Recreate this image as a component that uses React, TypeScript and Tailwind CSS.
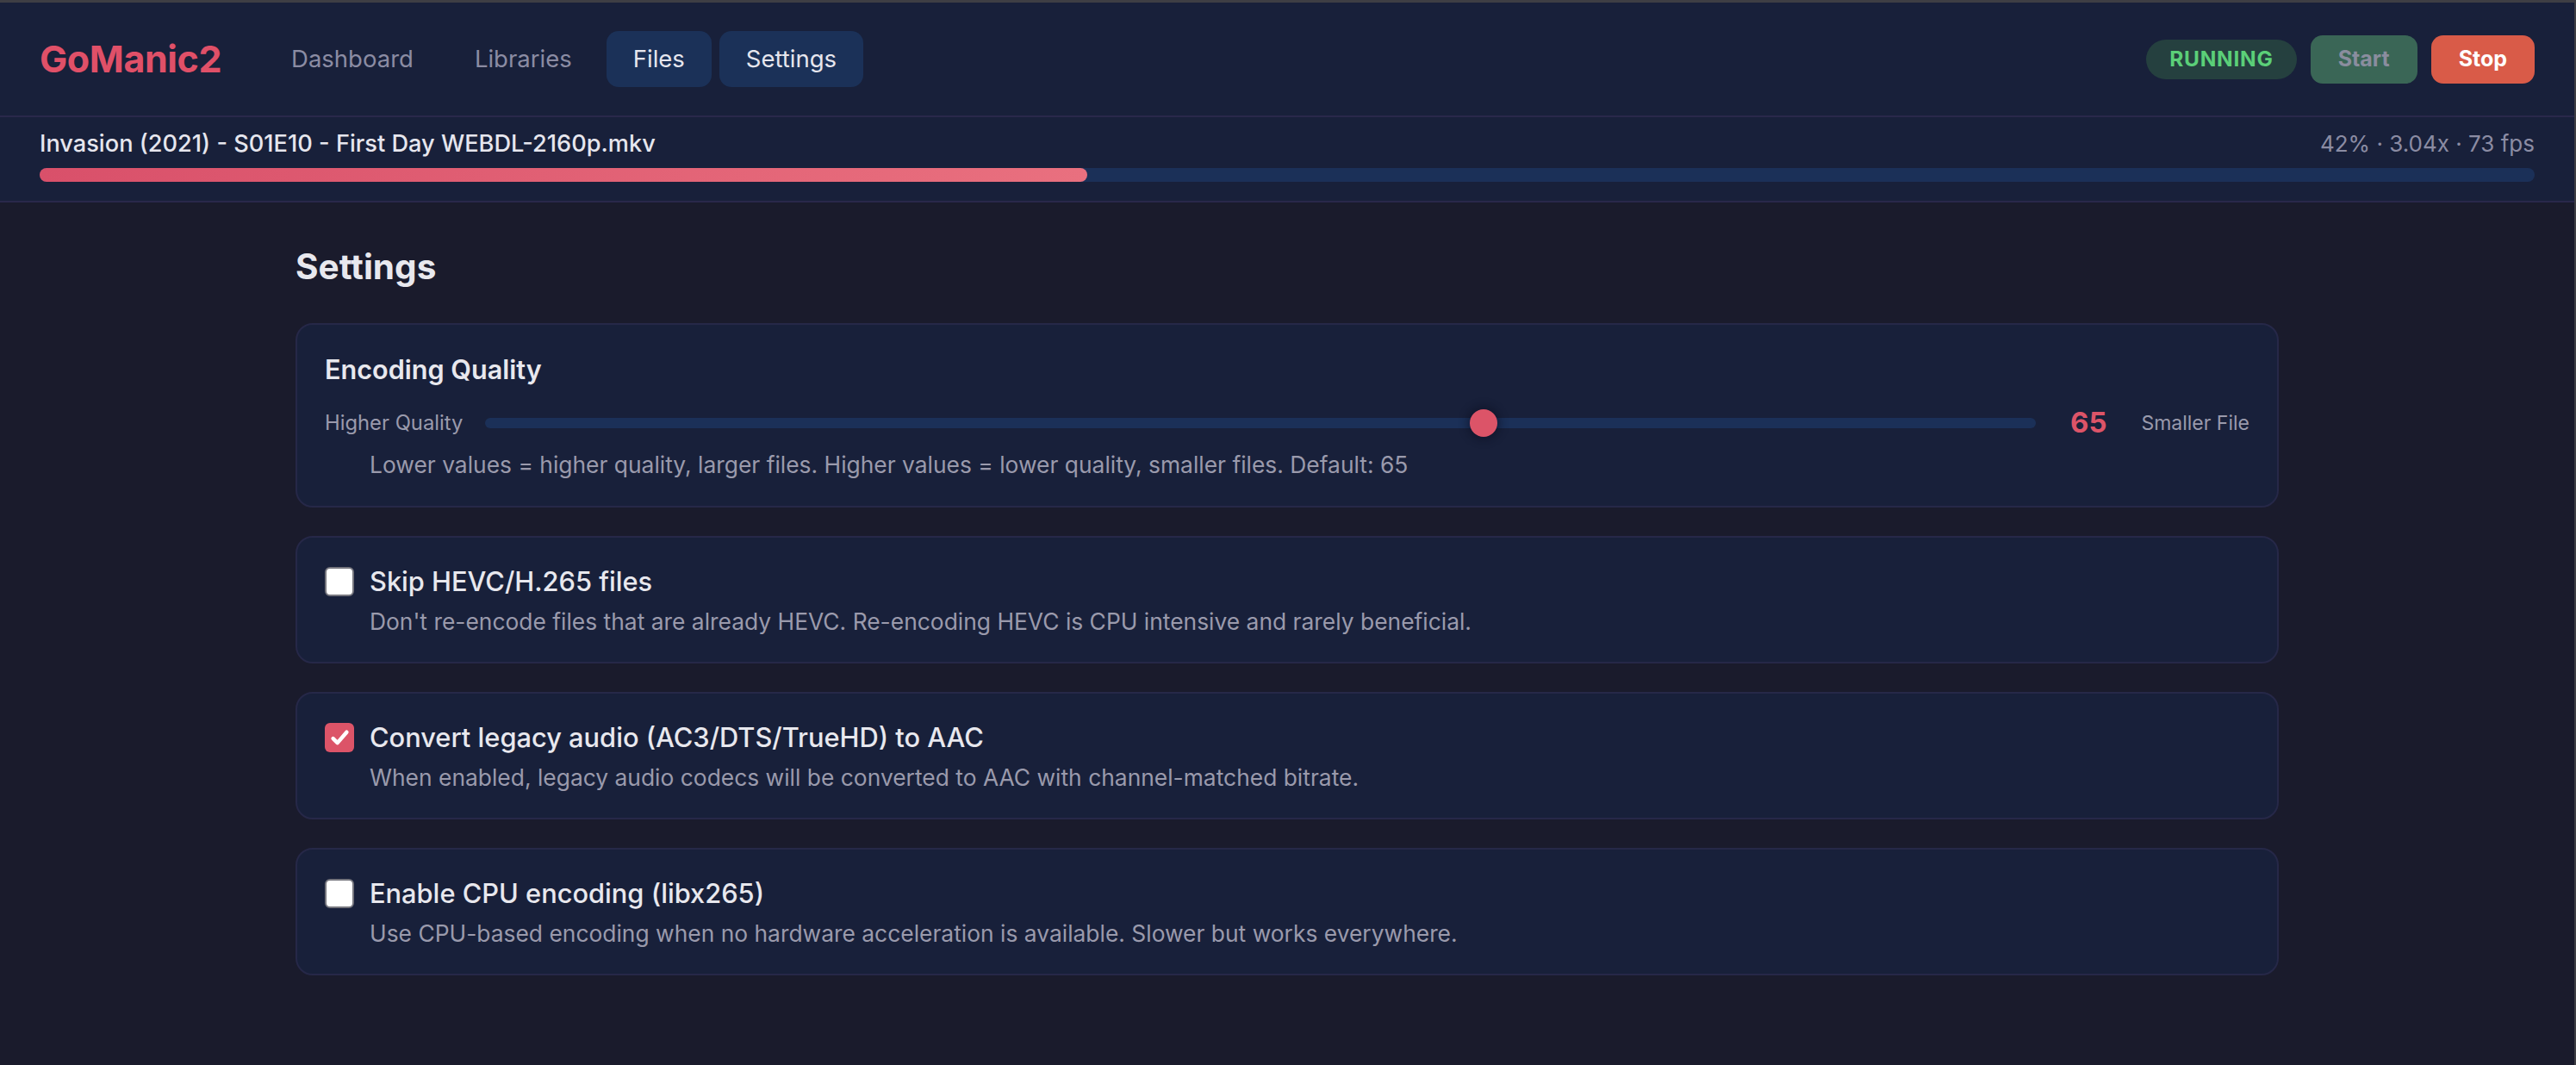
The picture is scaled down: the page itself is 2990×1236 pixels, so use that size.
import React from "react";

type Toggle = {
  key: string;
  title: string;
  description: string;
  checked: boolean;
};

const toggles: Toggle[] = [
  {
    key: "skip-hevc",
    title: "Skip HEVC/H.265 files",
    description:
      "Don't re-encode files that are already HEVC. Re-encoding HEVC is CPU intensive and rarely beneficial.",
    checked: false,
  },
  {
    key: "legacy-audio",
    title: "Convert legacy audio (AC3/DTS/TrueHD) to AAC",
    description: "When enabled, legacy audio codecs will be converted to AAC with channel-matched bitrate.",
    checked: true,
  },
  {
    key: "cpu-encoding",
    title: "Enable CPU encoding (libx265)",
    description: "Use CPU-based encoding when no hardware acceleration is available. Slower but works everywhere.",
    checked: false,
  },
];

const navItems = [
  { label: "Dashboard", active: false },
  { label: "Libraries", active: false },
  { label: "Files", active: true },
  { label: "Settings", active: true },
];

function Checkbox({ checked }: { checked: boolean }) {
  if (checked) {
    return (
      <span className="mt-[1px] flex h-[34px] w-[34px] shrink-0 items-center justify-center rounded-[6px] bg-[#dc5468]">
        <svg viewBox="0 0 24 24" className="h-[27px] w-[27px]" fill="none">
          <path d="M5 12.5l4.5 4.5L19 6" stroke="white" strokeWidth="4" strokeLinecap="round" strokeLinejoin="round" />
        </svg>
      </span>
    );
  }
  return <span className="mt-[1px] block h-[34px] w-[34px] shrink-0 rounded-[6px] border-2 border-[#76767e] bg-white" />;
}

function QualitySlider({ value, min, max }: { value: number; min: number; max: number }) {
  const frac = (value - min) / (max - min);
  return (
    <div className="mt-[29px] flex h-[32px] items-center gap-[26px]">
      <span className="text-[23.8px] text-[#9a9aac]">Higher Quality</span>
      <div className="relative h-[12px] flex-1 rounded-full bg-[#1b3058]">
        <span
          className="absolute top-1/2 h-[32px] w-[32px] -translate-y-1/2 rounded-full bg-[#dc5468] shadow-[0_0_10px_4px_rgba(10,14,30,0.45)]"
          style={{ left: `calc(${frac * 100}% - ${frac * 32}px)` }}
        />
      </div>
      <span className="w-[70px] text-center text-[33px] font-bold text-[#dc5468]">{value}</span>
      <span className="text-[23px] text-[#9a9aac]">Smaller File</span>
    </div>
  );
}

export default function App() {
  return (
    <div className="min-h-screen border-t-[3px] border-r-2 border-[#3e3e44] bg-[#1a1b2c] font-['Inter',sans-serif]">
      {/* top bar */}
      <header className="flex h-[133px] items-center justify-between border-b-2 border-[#29284a] bg-[#18203a] px-[46px]">
        <div className="flex items-center gap-[50px]">
          <span className="text-[43px] font-bold tracking-[-0.01em] text-[#e05068]">GoManic2</span>
          <nav className="flex items-center gap-[9px]">
            {navItems.map((item) => (
              <span
                key={item.label}
                className={
                  item.active
                    ? "flex h-[65px] items-center rounded-[14px] bg-[#1b3158] px-[31px] text-[27.5px] text-[#e6e6ee]"
                    : "flex h-[65px] items-center rounded-[14px] px-[31px] text-[27.5px] text-[#8b8ca3]"
                }
              >
                {item.label}
              </span>
            ))}
          </nav>
        </div>
        <div className="flex items-center gap-[16px]">
          <span className="flex h-[46px] items-center rounded-full bg-[#25403f] px-[27px] text-[24.5px] font-bold tracking-[0.03em] text-[#5bcf78]">
            RUNNING
          </span>
          <span className="flex h-[56px] items-center rounded-[14px] bg-[#3a6656] px-[32px] text-[25px] font-bold text-[#8a8d9e]">
            Start
          </span>
          <span className="flex h-[56px] items-center rounded-[14px] bg-[#d95b48] px-[32px] text-[25px] font-bold text-white">
            Stop
          </span>
        </div>
      </header>

      {/* current job */}
      <section className="border-b-2 border-[#29284a] bg-[#18203a] px-[46px] pb-[22px] pt-[13px]">
        <div className="flex items-center justify-between leading-[36px]">
          <span className="text-[27.2px] font-medium text-[#e6e6ee]">
            Invasion (2021) - S01E10 - First Day WEBDL-2160p.mkv
          </span>
          <span className="text-[26px] text-[#8b8ca3]">42% · 3.04x · 73 fps</span>
        </div>
        <div className="mt-[10px] h-[16px] rounded-full bg-[#1b3058]">
          <div className="h-full w-[42%] rounded-full bg-gradient-to-r from-[#d9506a] to-[#e9707f]" />
        </div>
      </section>

      <main className="mx-auto max-w-[2302px] pb-[60px] pt-[50px]">
        <h1 className="mb-[40px] text-[40.5px] font-bold leading-[50px] text-[#e8e8ee]">Settings</h1>

        <div className="flex flex-col gap-[33px]">
          <div className="rounded-[20px] border-2 border-[#262848] bg-[#18203a] px-[32px] pb-[30px] pt-[34px]">
            <h2 className="text-[30.6px] font-semibold leading-[35px] text-[#e8e8ee]">Encoding Quality</h2>
            <QualitySlider value={65} min={1} max={100} />
            <p className="ml-[52px] mt-[14px] text-[26.4px] leading-[36px] text-[#9a9aac]">
              Lower values = higher quality, larger files. Higher values = lower quality, smaller files. Default: 65
            </p>
          </div>

          {toggles.map((t) => (
            <div
              key={t.key}
              className="flex items-start gap-[18px] rounded-[20px] border-2 border-[#262848] bg-[#18203a] px-[32px] pb-[29px] pt-[33px]"
            >
              <Checkbox checked={t.checked} />
              <div>
                <div className="text-[30.8px] font-medium leading-[36px] text-[#e8e8ee]">{t.title}</div>
                <p className="mt-[10px] text-[26.4px] leading-[36px] text-[#9a9aac]">{t.description}</p>
              </div>
            </div>
          ))}
        </div>
      </main>
    </div>
  );
}
